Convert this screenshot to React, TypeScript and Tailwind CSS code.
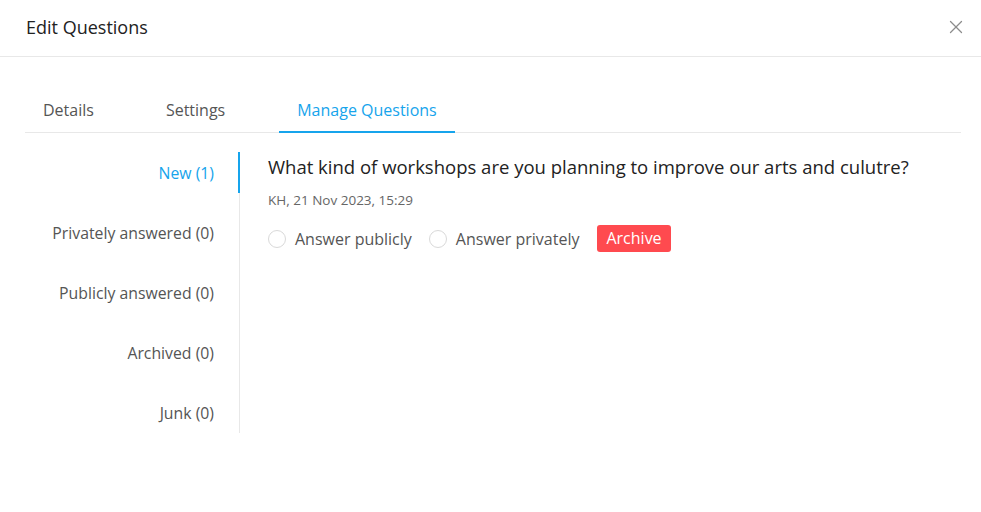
import { X } from "lucide-react";

const tabs = ["Details", "Settings", "Manage Questions"];
const folders = [
  { label: "New (1)", active: true },
  { label: "Privately answered (0)", active: false },
  { label: "Publicly answered (0)", active: false },
  { label: "Archived (0)", active: false },
  { label: "Junk (0)", active: false },
];

export default function App() {
  return (
    <div className="h-[512px] w-[981px] bg-white text-[#333] font-['Open_Sans','Noto_Sans',sans-serif]">
      <header className="flex h-[57px] items-center justify-between border-b border-[#e8e8e8] pl-[26px] pr-[14px] pb-[3px]">
        <h1 className="text-[18px] leading-6 text-[#222]">Edit Questions</h1>
        <X size={22} strokeWidth={1.4} className="text-[#8c8c8c]" />
      </header>

      <div className="pl-[25px] pr-[20px] pt-[31px]">
        <nav className="flex border-b border-[#e8e8e8]">
          {tabs.map((tab, i) => (
            <div
              key={tab}
              className={`mr-[36px] border-b-2 px-[18px] pt-[10px] pb-[9px] text-base leading-6 -mb-px ${
                i === 2 ? "border-[#16a4ec] text-[#16a4ec]" : "border-transparent text-[#555]"
              }`}
            >
              {tab}
            </div>
          ))}
        </nav>

        <div className="mt-[19px] flex">
          <aside className="flex w-[215px] flex-col gap-[19px] border-r border-[#e8e8e8]">
            {folders.map((f) => (
              <div
                key={f.label}
                className={`-mr-px flex h-[41px] items-center justify-end border-r-2 pt-[2px] pr-[24px] text-[15.8px] ${
                  f.active ? "border-[#16a4ec] text-[#16a4ec]" : "border-transparent text-[#555]"
                }`}
              >
                {f.label}
              </div>
            ))}
          </aside>

          <main className="flex-1 pl-[28px] pt-[2px]">
            <p className="text-[18.5px] leading-[26px] text-[#222]">
              What kind of workshops are you planning to improve our arts and culutre?
            </p>
            <p className="mt-[10px] text-[13.5px] leading-[20px] text-[#666]">KH, 21 Nov 2023, 15:29</p>
            <div className="mt-[15px] flex items-center text-base text-[#555]">
              <label className="flex items-center gap-[9px]">
                <span className="h-[18px] w-[18px] rounded-full border border-[#d9d9d9] bg-white" />
                Answer publicly
              </label>
              <label className="ml-[17px] flex items-center gap-[9px]">
                <span className="h-[18px] w-[18px] rounded-full border border-[#d9d9d9] bg-white" />
                Answer privately
              </label>
              <button
                type="button"
                className="ml-[18px] h-[27px] rounded-[3px] bg-[#ff4a4f] px-[9px] text-base leading-[27px] text-white"
              >
                Archive
              </button>
            </div>
          </main>
        </div>
      </div>
    </div>
  );
}
